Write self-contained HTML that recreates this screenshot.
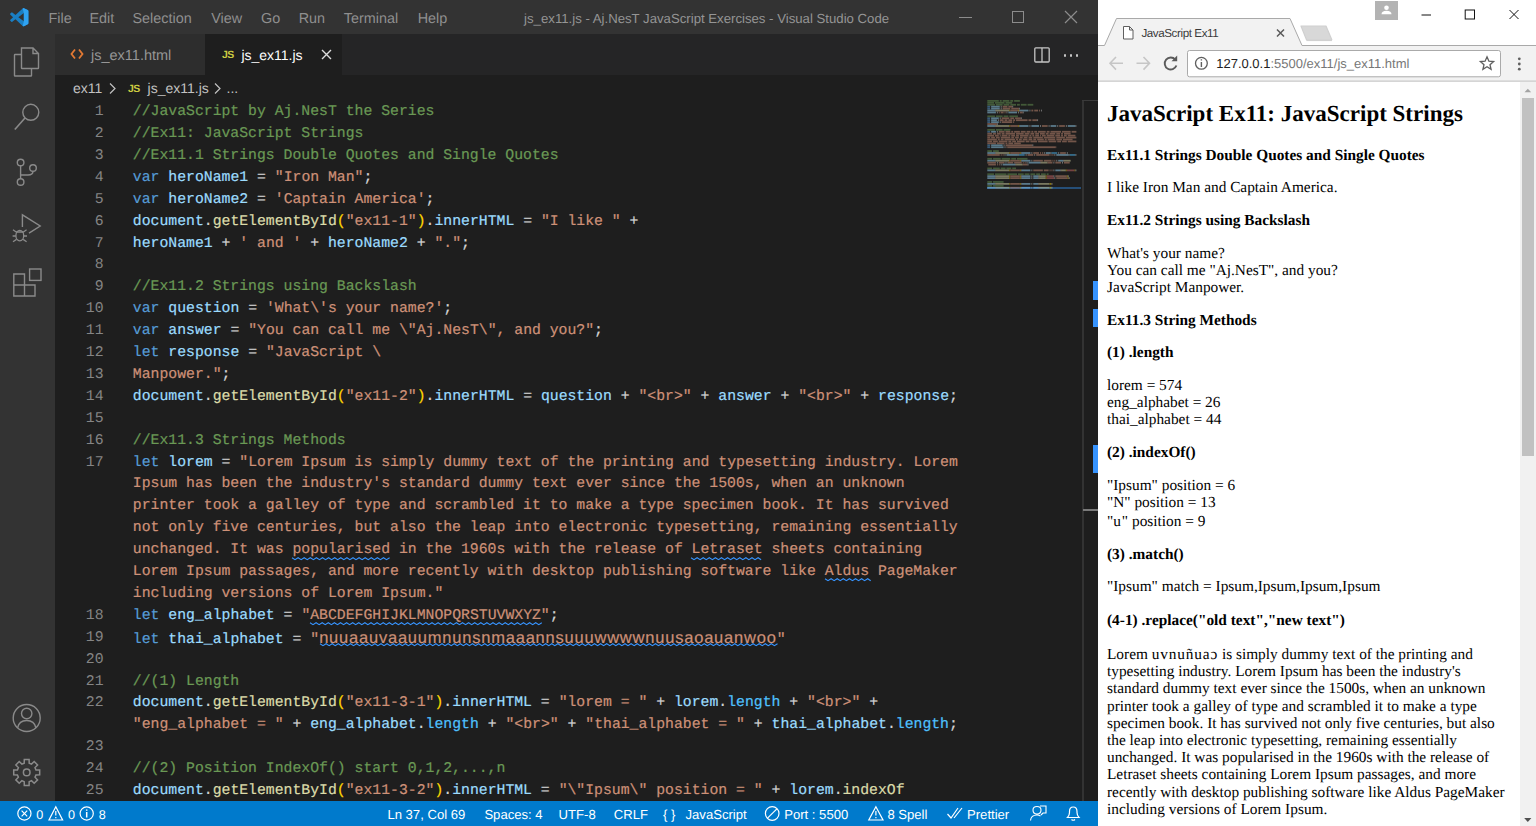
<!DOCTYPE html>
<html><head><meta charset="utf-8"><title>VS Code + Chrome</title>
<style>
html,body{margin:0;padding:0;width:1536px;height:826px;overflow:hidden;background:#1e1e1e;position:relative}
.t{position:absolute;white-space:pre;text-rendering:geometricPrecision}
svg{overflow:visible}
</style></head><body>
<div style="position:absolute;left:0;top:0;width:1098px;height:34px;background:#333333"></div><svg style="position:absolute;left:9.5px;top:7.6px" width="18.5" height="18.3" viewBox="0 0 100 100">
<path fill="#1a7fc4" d="M96.46 10.8L75.86.87a6.23 6.23 0 0 0-7.1 1.2L29.35 38.04 12.19 25.01a4.16 4.16 0 0 0-5.32.24l-5.5 5a4.17 4.17 0 0 0 0 6.16L16.26 50 1.37 63.59a4.17 4.17 0 0 0 0 6.16l5.5 5a4.16 4.16 0 0 0 5.32.24l17.16-13.03L68.76 97.93a6.23 6.23 0 0 0 7.1 1.2l20.6-9.92A6.25 6.25 0 0 0 100 83.58V16.42a6.25 6.25 0 0 0-3.54-5.62zM75 72.7L45.11 50 75 27.3z"/>
<path fill="#2fa3f2" d="M75.86.87a6.23 6.23 0 0 0-7.1 1.2L75 27.3V72.7L68.76 97.93a6.23 6.23 0 0 0 7.1 1.2l20.6-9.92A6.25 6.25 0 0 0 100 83.58V16.42a6.25 6.25 0 0 0-3.54-5.62z"/>
</svg><div class="t" style="left:48.50px;top:-1px;font:400 14.4px/40px 'Liberation Sans', sans-serif;color:#8f8f8f;">File</div>
<div class="t" style="left:89.50px;top:-1px;font:400 14.4px/40px 'Liberation Sans', sans-serif;color:#8f8f8f;">Edit</div>
<div class="t" style="left:132.50px;top:-1px;font:400 14.4px/40px 'Liberation Sans', sans-serif;color:#8f8f8f;">Selection</div>
<div class="t" style="left:211.20px;top:-1px;font:400 14.4px/40px 'Liberation Sans', sans-serif;color:#8f8f8f;">View</div>
<div class="t" style="left:261.00px;top:-1px;font:400 14.4px/40px 'Liberation Sans', sans-serif;color:#8f8f8f;">Go</div>
<div class="t" style="left:298.70px;top:-1px;font:400 14.4px/40px 'Liberation Sans', sans-serif;color:#8f8f8f;">Run</div>
<div class="t" style="left:343.80px;top:-1px;font:400 14.4px/40px 'Liberation Sans', sans-serif;color:#8f8f8f;">Terminal</div>
<div class="t" style="left:417.70px;top:-1px;font:400 14.4px/40px 'Liberation Sans', sans-serif;color:#8f8f8f;">Help</div>
<div class="t" style="left:524.10px;top:-1px;font:400 13.2px/40px 'Liberation Sans', sans-serif;color:#959595;">js_ex11.js - Aj.NesT JavaScript Exercises - Visual Studio Code</div>
<div style="position:absolute;left:959px;top:16.5px;width:13px;height:1px;background:#8c8c8c"></div><div style="position:absolute;left:1012px;top:11px;width:10px;height:10px;border:1px solid #8c8c8c"></div><svg style="position:absolute;left:1064px;top:10px" width="14" height="14" viewBox="0 0 14 14"><path d="M1 1 L13 13 M13 1 L1 13" stroke="#8c8c8c" stroke-width="1.2"/></svg><div style="position:absolute;left:0;top:34px;width:55px;height:767px;background:#333333"></div><svg style="position:absolute;left:0;top:34px" width="55" height="767" viewBox="0 34 55 767" fill="none" stroke="#8a8a8a" stroke-width="1.4">
<path d="M21 54.5 H15 Q14.5 54.5 14.5 55 V75.5 Q14.5 76 15 76 H31 Q31.5 76 31.5 75.5 V68.5"/>
<path d="M21.5 48 H33 L38.5 53.5 V68 Q38.5 68.5 38 68.5 H22 Q21.5 68.5 21.5 68 Z M33 48 V53.5 H38.5"/>
<circle cx="30.8" cy="112.3" r="8"/>
<path d="M25 118 L14.8 129.5" stroke-width="1.6"/>
<circle cx="20.6" cy="162.5" r="3.3"/>
<circle cx="20.6" cy="182" r="3.3"/>
<circle cx="33" cy="168" r="3.3"/>
<path d="M20.6 165.8 V178.7 M33 171.3 Q33 175 28 175 H20.6"/>
<path d="M22.4 227 V214.8 L40.2 226 L29 233.2"/>
<ellipse cx="19.8" cy="235.6" rx="3.9" ry="5.3" stroke-width="1.3"/>
<path d="M16 232 H23.6 M13 229.8 L16.5 232.2 M26.6 229.8 L23.1 232.2 M12.6 236 H15.9 M27 236 H23.7 M13 241.8 L16.5 239.4 M26.6 241.8 L23.1 239.4" stroke-width="1.3"/>
<path d="M13.8 274 H24.5 V285 H35 V296 H13.8 Z M13.8 285 H24.5 V296"/>
<rect x="29.6" y="269" width="11.4" height="11.4"/>
<circle cx="26.7" cy="718" r="13.5"/>
<circle cx="26.7" cy="713.5" r="5.2"/>
<path d="M17.5 728 Q19 720.5 26.7 720.5 Q34.4 720.5 36 728"/>
<circle cx="26.7" cy="772.4" r="3.3" stroke-width="1.5"/>
<path d="M35.97 769.92 L39.68 769.99 L39.68 774.81 L35.97 774.88 L35.01 777.20 L37.58 779.88 L34.18 783.28 L31.50 780.71 L29.18 781.67 L29.11 785.38 L24.29 785.38 L24.22 781.67 L21.90 780.71 L19.22 783.28 L15.82 779.88 L18.39 777.20 L17.43 774.88 L13.72 774.81 L13.72 769.99 L17.43 769.92 L18.39 767.60 L15.82 764.92 L19.22 761.52 L21.90 764.09 L24.22 763.13 L24.29 759.42 L29.11 759.42 L29.18 763.13 L31.50 764.09 L34.18 761.52 L37.58 764.92 L35.01 767.60 Z" stroke-width="1.5"/>
</svg><div style="position:absolute;left:55px;top:34px;width:1043px;height:41px;background:#252526"></div><div style="position:absolute;left:55px;top:34px;width:149.5px;height:41px;background:#2d2d2d"></div><div style="position:absolute;left:204.5px;top:34px;width:137.5px;height:41px;background:#1e1e1e"></div><svg style="position:absolute;left:70px;top:48px" width="14" height="12" viewBox="0 0 14 12" fill="none" stroke="#e37933" stroke-width="1.8"><path d="M5 1.5 L1.5 6 L5 10.5 M9 1.5 L12.5 6 L9 10.5"/></svg><div class="t" style="left:91.00px;top:36px;font:400 14.5px/40px 'Liberation Sans', sans-serif;color:#969696;">js_ex11.html</div>
<div class="t" style="left:222.00px;top:35px;font:700 10.5px/40px 'Liberation Sans', sans-serif;color:#cbcb41;letter-spacing:-0.5px;">JS</div>
<div class="t" style="left:241.40px;top:35px;font:400 14.0px/40px 'Liberation Sans', sans-serif;color:#ffffff;">js_ex11.js</div>
<svg style="position:absolute;left:321px;top:49px" width="11" height="11" viewBox="0 0 11 11"><path d="M1 1 L10 10 M10 1 L1 10" stroke="#dddddd" stroke-width="1.4"/></svg><svg style="position:absolute;left:1034px;top:47px" width="16" height="16" viewBox="0 0 16 16" fill="none" stroke="#c5c5c5" stroke-width="1.3"><rect x="0.8" y="0.8" width="14.4" height="14.2" rx="1"/><path d="M8 1 V15"/></svg><div style="position:absolute;left:1063.7px;top:54px;width:2.6px;height:2.6px;border-radius:2px;background:#c5c5c5"></div><div style="position:absolute;left:1069.7px;top:54px;width:2.6px;height:2.6px;border-radius:2px;background:#c5c5c5"></div><div style="position:absolute;left:1075.7px;top:54px;width:2.6px;height:2.6px;border-radius:2px;background:#c5c5c5"></div><div style="position:absolute;left:55px;top:75px;width:1043px;height:726px;background:#1e1e1e"></div><div class="t" style="left:73.00px;top:68px;font:400 14.0px/40px 'Liberation Sans', sans-serif;color:#c2c2c2;">ex11</div>
<svg style="position:absolute;left:108px;top:81px" width="9" height="14" viewBox="0 0 9 14" fill="none" stroke="#c2c2c2" stroke-width="1.2"><path d="M2 2.5 L7 7.5 L2 12.5"/></svg><div class="t" style="left:128.00px;top:69px;font:700 10.5px/40px 'Liberation Sans', sans-serif;color:#cbcb41;letter-spacing:-0.5px;">JS</div>
<div class="t" style="left:147.60px;top:68px;font:400 14.0px/40px 'Liberation Sans', sans-serif;color:#c2c2c2;">js_ex11.js</div>
<svg style="position:absolute;left:213px;top:81px" width="9" height="14" viewBox="0 0 9 14" fill="none" stroke="#c2c2c2" stroke-width="1.2"><path d="M2 2.5 L7 7.5 L2 12.5"/></svg><div class="t" style="left:226.50px;top:68px;font:400 14.0px/40px 'Liberation Sans', sans-serif;color:#c2c2c2;">...</div>
<div id="code"><div class="t" style="right:1432.40px;top:92px;font:400 14.795px/40px 'Liberation Mono', monospace;color:#858585;text-align:right;">1</div>
<div class="t" style="left:132.80px;top:92px;font:400 14.795px/40px 'Liberation Mono', monospace;color:#d4d4d4;-webkit-text-stroke:0.2px currentColor;"><span style="color:#6a9955">//JavaScript by Aj.NesT the Series</span></div>
<div class="t" style="right:1432.40px;top:114px;font:400 14.795px/40px 'Liberation Mono', monospace;color:#858585;text-align:right;">2</div>
<div class="t" style="left:132.80px;top:114px;font:400 14.795px/40px 'Liberation Mono', monospace;color:#d4d4d4;-webkit-text-stroke:0.2px currentColor;"><span style="color:#6a9955">//Ex11: JavaScript Strings</span></div>
<div class="t" style="right:1432.40px;top:136px;font:400 14.795px/40px 'Liberation Mono', monospace;color:#858585;text-align:right;">3</div>
<div class="t" style="left:132.80px;top:136px;font:400 14.795px/40px 'Liberation Mono', monospace;color:#d4d4d4;-webkit-text-stroke:0.2px currentColor;"><span style="color:#6a9955">//Ex11.1 Strings Double Quotes and Single Quotes</span></div>
<div class="t" style="right:1432.40px;top:158px;font:400 14.795px/40px 'Liberation Mono', monospace;color:#858585;text-align:right;">4</div>
<div class="t" style="left:132.80px;top:158px;font:400 14.795px/40px 'Liberation Mono', monospace;color:#d4d4d4;-webkit-text-stroke:0.2px currentColor;"><span style="color:#569cd6">var</span><span style="color:#d4d4d4"> </span><span style="color:#9cdcfe">heroName1</span><span style="color:#d4d4d4"> = </span><span style="color:#ce9178">"Iron Man"</span><span style="color:#d4d4d4">;</span></div>
<div class="t" style="right:1432.40px;top:180px;font:400 14.795px/40px 'Liberation Mono', monospace;color:#858585;text-align:right;">5</div>
<div class="t" style="left:132.80px;top:180px;font:400 14.795px/40px 'Liberation Mono', monospace;color:#d4d4d4;-webkit-text-stroke:0.2px currentColor;"><span style="color:#569cd6">var</span><span style="color:#d4d4d4"> </span><span style="color:#9cdcfe">heroName2</span><span style="color:#d4d4d4"> = </span><span style="color:#ce9178">'Captain America'</span><span style="color:#d4d4d4">;</span></div>
<div class="t" style="right:1432.40px;top:202px;font:400 14.795px/40px 'Liberation Mono', monospace;color:#858585;text-align:right;">6</div>
<div class="t" style="left:132.80px;top:202px;font:400 14.795px/40px 'Liberation Mono', monospace;color:#d4d4d4;-webkit-text-stroke:0.2px currentColor;"><span style="color:#9cdcfe">document</span><span style="color:#d4d4d4">.</span><span style="color:#dcdcaa">getElementById</span><span style="color:#ffd700">(</span><span style="color:#ce9178">"ex11-1"</span><span style="color:#ffd700">)</span><span style="color:#d4d4d4">.</span><span style="color:#9cdcfe">innerHTML</span><span style="color:#d4d4d4"> = </span><span style="color:#ce9178">"I like "</span><span style="color:#d4d4d4"> +</span></div>
<div class="t" style="right:1432.40px;top:224px;font:400 14.795px/40px 'Liberation Mono', monospace;color:#858585;text-align:right;">7</div>
<div class="t" style="left:132.80px;top:224px;font:400 14.795px/40px 'Liberation Mono', monospace;color:#d4d4d4;-webkit-text-stroke:0.2px currentColor;"><span style="color:#9cdcfe">heroName1</span><span style="color:#d4d4d4"> + </span><span style="color:#ce9178">' and '</span><span style="color:#d4d4d4"> + </span><span style="color:#9cdcfe">heroName2</span><span style="color:#d4d4d4"> + </span><span style="color:#ce9178">"."</span><span style="color:#d4d4d4">;</span></div>
<div class="t" style="right:1432.40px;top:245px;font:400 14.795px/40px 'Liberation Mono', monospace;color:#858585;text-align:right;">8</div>
<div class="t" style="right:1432.40px;top:267px;font:400 14.795px/40px 'Liberation Mono', monospace;color:#858585;text-align:right;">9</div>
<div class="t" style="left:132.80px;top:267px;font:400 14.795px/40px 'Liberation Mono', monospace;color:#d4d4d4;-webkit-text-stroke:0.2px currentColor;"><span style="color:#6a9955">//Ex11.2 Strings using Backslash</span></div>
<div class="t" style="right:1432.40px;top:289px;font:400 14.795px/40px 'Liberation Mono', monospace;color:#858585;text-align:right;">10</div>
<div class="t" style="left:132.80px;top:289px;font:400 14.795px/40px 'Liberation Mono', monospace;color:#d4d4d4;-webkit-text-stroke:0.2px currentColor;"><span style="color:#569cd6">var</span><span style="color:#d4d4d4"> </span><span style="color:#9cdcfe">question</span><span style="color:#d4d4d4"> = </span><span style="color:#ce9178">'What\'s your name?'</span><span style="color:#d4d4d4">;</span></div>
<div class="t" style="right:1432.40px;top:311px;font:400 14.795px/40px 'Liberation Mono', monospace;color:#858585;text-align:right;">11</div>
<div class="t" style="left:132.80px;top:311px;font:400 14.795px/40px 'Liberation Mono', monospace;color:#d4d4d4;-webkit-text-stroke:0.2px currentColor;"><span style="color:#569cd6">var</span><span style="color:#d4d4d4"> </span><span style="color:#9cdcfe">answer</span><span style="color:#d4d4d4"> = </span><span style="color:#ce9178">"You can call me \"Aj.NesT\", and you?"</span><span style="color:#d4d4d4">;</span></div>
<div class="t" style="right:1432.40px;top:333px;font:400 14.795px/40px 'Liberation Mono', monospace;color:#858585;text-align:right;">12</div>
<div class="t" style="left:132.80px;top:333px;font:400 14.795px/40px 'Liberation Mono', monospace;color:#d4d4d4;-webkit-text-stroke:0.2px currentColor;"><span style="color:#569cd6">let</span><span style="color:#d4d4d4"> </span><span style="color:#9cdcfe">response</span><span style="color:#d4d4d4"> = </span><span style="color:#ce9178">"JavaScript \</span></div>
<div class="t" style="right:1432.40px;top:355px;font:400 14.795px/40px 'Liberation Mono', monospace;color:#858585;text-align:right;">13</div>
<div class="t" style="left:132.80px;top:355px;font:400 14.795px/40px 'Liberation Mono', monospace;color:#d4d4d4;-webkit-text-stroke:0.2px currentColor;"><span style="color:#ce9178">Manpower."</span><span style="color:#d4d4d4">;</span></div>
<div class="t" style="right:1432.40px;top:377px;font:400 14.795px/40px 'Liberation Mono', monospace;color:#858585;text-align:right;">14</div>
<div class="t" style="left:132.80px;top:377px;font:400 14.795px/40px 'Liberation Mono', monospace;color:#d4d4d4;-webkit-text-stroke:0.2px currentColor;"><span style="color:#9cdcfe">document</span><span style="color:#d4d4d4">.</span><span style="color:#dcdcaa">getElementById</span><span style="color:#ffd700">(</span><span style="color:#ce9178">"ex11-2"</span><span style="color:#ffd700">)</span><span style="color:#d4d4d4">.</span><span style="color:#9cdcfe">innerHTML</span><span style="color:#d4d4d4"> = </span><span style="color:#9cdcfe">question</span><span style="color:#d4d4d4"> + </span><span style="color:#ce9178">"&lt;br&gt;"</span><span style="color:#d4d4d4"> + </span><span style="color:#9cdcfe">answer</span><span style="color:#d4d4d4"> + </span><span style="color:#ce9178">"&lt;br&gt;"</span><span style="color:#d4d4d4"> + </span><span style="color:#9cdcfe">response</span><span style="color:#d4d4d4">;</span></div>
<div class="t" style="right:1432.40px;top:399px;font:400 14.795px/40px 'Liberation Mono', monospace;color:#858585;text-align:right;">15</div>
<div class="t" style="right:1432.40px;top:421px;font:400 14.795px/40px 'Liberation Mono', monospace;color:#858585;text-align:right;">16</div>
<div class="t" style="left:132.80px;top:421px;font:400 14.795px/40px 'Liberation Mono', monospace;color:#d4d4d4;-webkit-text-stroke:0.2px currentColor;"><span style="color:#6a9955">//Ex11.3 Strings Methods</span></div>
<div class="t" style="right:1432.40px;top:443px;font:400 14.795px/40px 'Liberation Mono', monospace;color:#858585;text-align:right;">17</div>
<div class="t" style="left:132.80px;top:443px;font:400 14.795px/40px 'Liberation Mono', monospace;color:#d4d4d4;-webkit-text-stroke:0.2px currentColor;"><span style="color:#569cd6">let</span><span style="color:#d4d4d4"> </span><span style="color:#9cdcfe">lorem</span><span style="color:#d4d4d4"> = </span><span style="color:#ce9178">"Lorem Ipsum is simply dummy text of the printing and typesetting industry. Lorem</span></div>
<div class="t" style="left:132.80px;top:464px;font:400 14.795px/40px 'Liberation Mono', monospace;color:#d4d4d4;-webkit-text-stroke:0.2px currentColor;"><span style="color:#ce9178">Ipsum has been the industry's standard dummy text ever since the 1500s, when an unknown</span></div>
<div class="t" style="left:132.80px;top:486px;font:400 14.795px/40px 'Liberation Mono', monospace;color:#d4d4d4;-webkit-text-stroke:0.2px currentColor;"><span style="color:#ce9178">printer took a galley of type and scrambled it to make a type specimen book. It has survived</span></div>
<div class="t" style="left:132.80px;top:508px;font:400 14.795px/40px 'Liberation Mono', monospace;color:#d4d4d4;-webkit-text-stroke:0.2px currentColor;"><span style="color:#ce9178">not only five centuries, but also the leap into electronic typesetting, remaining essentially</span></div>
<div class="t" style="left:132.80px;top:530px;font:400 14.795px/40px 'Liberation Mono', monospace;color:#d4d4d4;-webkit-text-stroke:0.2px currentColor;"><span style="color:#ce9178">unchanged. It was popularised in the 1960s with the release of Letraset sheets containing</span></div>
<div class="t" style="left:132.80px;top:552px;font:400 14.795px/40px 'Liberation Mono', monospace;color:#d4d4d4;-webkit-text-stroke:0.2px currentColor;"><span style="color:#ce9178">Lorem Ipsum passages, and more recently with desktop publishing software like Aldus PageMaker</span></div>
<div class="t" style="left:132.80px;top:574px;font:400 14.795px/40px 'Liberation Mono', monospace;color:#d4d4d4;-webkit-text-stroke:0.2px currentColor;"><span style="color:#ce9178">including versions of Lorem Ipsum."</span></div>
<div class="t" style="right:1432.40px;top:596px;font:400 14.795px/40px 'Liberation Mono', monospace;color:#858585;text-align:right;">18</div>
<div class="t" style="left:132.80px;top:596px;font:400 14.795px/40px 'Liberation Mono', monospace;color:#d4d4d4;-webkit-text-stroke:0.2px currentColor;"><span style="color:#569cd6">let</span><span style="color:#d4d4d4"> </span><span style="color:#9cdcfe">eng_alphabet</span><span style="color:#d4d4d4"> = </span><span style="color:#ce9178">"ABCDEFGHIJKLMNOPQRSTUVWXYZ"</span><span style="color:#d4d4d4">;</span></div>
<div class="t" style="right:1432.40px;top:618px;font:400 14.795px/40px 'Liberation Mono', monospace;color:#858585;text-align:right;">19</div>
<div class="t" style="left:132.80px;top:618px;font:400 14.795px/40px 'Liberation Mono', monospace;color:#d4d4d4;-webkit-text-stroke:0.2px currentColor;"><span style="color:#569cd6">let</span><span style="color:#d4d4d4"> </span><span style="color:#9cdcfe">thai_alphabet</span><span style="color:#d4d4d4"> = </span><span style="color:#ce9178">"</span><span style="color:#ce9178;display:inline-block;width:457.5px;white-space:nowrap;font-family:'Liberation Sans',sans-serif;font-size:16.5px;letter-spacing:0.786px">nuuaauvaauumnunsnmaaannsuuuwwwwnuusaoauanwoo</span><span style="color:#ce9178">"</span></div>
<div class="t" style="right:1432.40px;top:640px;font:400 14.795px/40px 'Liberation Mono', monospace;color:#858585;text-align:right;">20</div>
<div class="t" style="right:1432.40px;top:662px;font:400 14.795px/40px 'Liberation Mono', monospace;color:#858585;text-align:right;">21</div>
<div class="t" style="left:132.80px;top:662px;font:400 14.795px/40px 'Liberation Mono', monospace;color:#d4d4d4;-webkit-text-stroke:0.2px currentColor;"><span style="color:#6a9955">//(1) Length</span></div>
<div class="t" style="right:1432.40px;top:683px;font:400 14.795px/40px 'Liberation Mono', monospace;color:#858585;text-align:right;">22</div>
<div class="t" style="left:132.80px;top:683px;font:400 14.795px/40px 'Liberation Mono', monospace;color:#d4d4d4;-webkit-text-stroke:0.2px currentColor;"><span style="color:#9cdcfe">document</span><span style="color:#d4d4d4">.</span><span style="color:#dcdcaa">getElementById</span><span style="color:#ffd700">(</span><span style="color:#ce9178">"ex11-3-1"</span><span style="color:#ffd700">)</span><span style="color:#d4d4d4">.</span><span style="color:#9cdcfe">innerHTML</span><span style="color:#d4d4d4"> = </span><span style="color:#ce9178">"lorem = "</span><span style="color:#d4d4d4"> + </span><span style="color:#9cdcfe">lorem</span><span style="color:#d4d4d4">.</span><span style="color:#4fc1ff">length</span><span style="color:#d4d4d4"> + </span><span style="color:#ce9178">"&lt;br&gt;"</span><span style="color:#d4d4d4"> +</span></div>
<div class="t" style="left:132.80px;top:705px;font:400 14.795px/40px 'Liberation Mono', monospace;color:#d4d4d4;-webkit-text-stroke:0.2px currentColor;"><span style="color:#ce9178">"eng_alphabet = "</span><span style="color:#d4d4d4"> + </span><span style="color:#9cdcfe">eng_alphabet</span><span style="color:#d4d4d4">.</span><span style="color:#4fc1ff">length</span><span style="color:#d4d4d4"> + </span><span style="color:#ce9178">"&lt;br&gt;"</span><span style="color:#d4d4d4"> + </span><span style="color:#ce9178">"thai_alphabet = "</span><span style="color:#d4d4d4"> + </span><span style="color:#9cdcfe">thai_alphabet</span><span style="color:#d4d4d4">.</span><span style="color:#4fc1ff">length</span><span style="color:#d4d4d4">;</span></div>
<div class="t" style="right:1432.40px;top:727px;font:400 14.795px/40px 'Liberation Mono', monospace;color:#858585;text-align:right;">23</div>
<div class="t" style="right:1432.40px;top:749px;font:400 14.795px/40px 'Liberation Mono', monospace;color:#858585;text-align:right;">24</div>
<div class="t" style="left:132.80px;top:749px;font:400 14.795px/40px 'Liberation Mono', monospace;color:#d4d4d4;-webkit-text-stroke:0.2px currentColor;"><span style="color:#6a9955">//(2) Position IndexOf() start 0,1,2,...,n</span></div>
<div class="t" style="right:1432.40px;top:771px;font:400 14.795px/40px 'Liberation Mono', monospace;color:#858585;text-align:right;">25</div>
<div class="t" style="left:132.80px;top:771px;font:400 14.795px/40px 'Liberation Mono', monospace;color:#d4d4d4;-webkit-text-stroke:0.2px currentColor;"><span style="color:#9cdcfe">document</span><span style="color:#d4d4d4">.</span><span style="color:#dcdcaa">getElementById</span><span style="color:#ffd700">(</span><span style="color:#ce9178">"ex11-3-2"</span><span style="color:#ffd700">)</span><span style="color:#d4d4d4">.</span><span style="color:#9cdcfe">innerHTML</span><span style="color:#d4d4d4"> = </span><span style="color:#ce9178">"\"Ipsum\" position = "</span><span style="color:#d4d4d4"> + </span><span style="color:#9cdcfe">lorem</span><span style="color:#d4d4d4">.</span><span style="color:#dcdcaa">indexOf</span></div>
</div><svg style="position:absolute;left:292.0px;top:556.5px" width="101" height="4" viewBox="0 -0.7 101 4"><polyline points="0.0,0.0 3.0,2.0 6.1,0.0 9.1,2.0 12.2,0.0 15.2,2.0 18.3,0.0 21.4,2.0 24.4,0.0 27.5,2.0 30.5,0.0 33.6,2.0 36.6,0.0 39.6,2.0 42.7,0.0 45.7,2.0 48.8,0.0 51.8,2.0 54.9,0.0 57.9,2.0 61.0,0.0 64.0,2.0 67.1,0.0 70.1,2.0 73.2,0.0 76.2,2.0 79.3,0.0 82.3,2.0 85.4,0.0 88.4,2.0 91.5,0.0 94.5,2.0 97.6,0.0" fill="none" stroke="#3794ff" stroke-width="1.1"/></svg><svg style="position:absolute;left:691.4px;top:556.5px" width="74" height="4" viewBox="0 -0.7 74 4"><polyline points="0.0,0.0 3.0,2.0 6.1,0.0 9.1,2.0 12.2,0.0 15.2,2.0 18.3,0.0 21.4,2.0 24.4,0.0 27.5,2.0 30.5,0.0 33.6,2.0 36.6,0.0 39.6,2.0 42.7,0.0 45.7,2.0 48.8,0.0 51.8,2.0 54.9,0.0 57.9,2.0 61.0,0.0 64.0,2.0 67.1,0.0 70.1,2.0" fill="none" stroke="#3794ff" stroke-width="1.1"/></svg><svg style="position:absolute;left:824.5px;top:578.4px" width="48" height="4" viewBox="0 -0.7 48 4"><polyline points="0.0,0.0 3.0,2.0 6.1,0.0 9.1,2.0 12.2,0.0 15.2,2.0 18.3,0.0 21.4,2.0 24.4,0.0 27.5,2.0 30.5,0.0 33.6,2.0 36.6,0.0 39.6,2.0 42.7,0.0 45.7,2.0" fill="none" stroke="#3794ff" stroke-width="1.1"/></svg><svg style="position:absolute;left:309.8px;top:622.2px" width="234" height="4" viewBox="0 -0.7 234 4"><polyline points="0.0,0.0 3.0,2.0 6.1,0.0 9.1,2.0 12.2,0.0 15.2,2.0 18.3,0.0 21.4,2.0 24.4,0.0 27.5,2.0 30.5,0.0 33.6,2.0 36.6,0.0 39.6,2.0 42.7,0.0 45.7,2.0 48.8,0.0 51.8,2.0 54.9,0.0 57.9,2.0 61.0,0.0 64.0,2.0 67.1,0.0 70.1,2.0 73.2,0.0 76.2,2.0 79.3,0.0 82.3,2.0 85.4,0.0 88.4,2.0 91.5,0.0 94.5,2.0 97.6,0.0 100.6,2.0 103.7,0.0 106.7,2.0 109.8,0.0 112.8,2.0 115.9,0.0 118.9,2.0 122.0,0.0 125.0,2.0 128.1,0.0 131.1,2.0 134.2,0.0 137.2,2.0 140.3,0.0 143.3,2.0 146.4,0.0 149.5,2.0 152.5,0.0 155.6,2.0 158.6,0.0 161.7,2.0 164.7,0.0 167.8,2.0 170.8,0.0 173.9,2.0 176.9,0.0 180.0,2.0 183.0,0.0 186.1,2.0 189.1,0.0 192.2,2.0 195.2,0.0 198.3,2.0 201.3,0.0 204.4,2.0 207.4,0.0 210.5,2.0 213.5,0.0 216.6,2.0 219.6,0.0 222.7,2.0 225.7,0.0 228.8,2.0 231.8,0.0" fill="none" stroke="#3794ff" stroke-width="1.1"/></svg><svg style="position:absolute;left:320.4px;top:643.2px" width="458" height="4" viewBox="0 -0.7 458 4"><polyline points="0.0,0 3.0,2.0 6.1,0 9.1,2.0 12.2,0 15.2,2.0 18.3,0 21.3,2.0 24.4,0 27.4,2.0 30.5,0 33.5,2.0 36.6,0 39.6,2.0 42.7,0 45.8,2.0 48.8,0 51.8,2.0 54.9,0 57.9,2.0 61.0,0 64.0,2.0 67.1,0 70.1,2.0 73.2,0 76.2,2.0 79.3,0 82.3,2.0 85.4,0 88.4,2.0 91.5,0 94.5,2.0 97.6,0 100.6,2.0 103.7,0 106.8,2.0 109.8,0 112.8,2.0 115.9,0 118.9,2.0 122.0,0 125.0,2.0 128.1,0 131.2,2.0 134.2,0 137.2,2.0 140.3,0 143.3,2.0 146.4,0 149.4,2.0 152.5,0 155.5,2.0 158.6,0 161.6,2.0 164.7,0 167.8,2.0 170.8,0 173.8,2.0 176.9,0 179.9,2.0 183.0,0 186.0,2.0 189.1,0 192.1,2.0 195.2,0 198.2,2.0 201.3,0 204.3,2.0 207.4,0 210.4,2.0 213.5,0 216.5,2.0 219.6,0 222.6,2.0 225.7,0 228.8,2.0 231.8,0 234.8,2.0 237.9,0 240.9,2.0 244.0,0 247.0,2.0 250.1,0 253.1,2.0 256.2,0 259.2,2.0 262.3,0 265.3,2.0 268.4,0 271.4,2.0 274.5,0 277.6,2.0 280.6,0 283.6,2.0 286.7,0 289.8,2.0 292.8,0 295.8,2.0 298.9,0 301.9,2.0 305.0,0 308.0,2.0 311.1,0 314.1,2.0 317.2,0 320.2,2.0 323.3,0 326.3,2.0 329.4,0 332.4,2.0 335.5,0 338.5,2.0 341.6,0 344.6,2.0 347.7,0 350.8,2.0 353.8,0 356.8,2.0 359.9,0 362.9,2.0 366.0,0 369.0,2.0 372.1,0 375.1,2.0 378.2,0 381.2,2.0 384.3,0 387.3,2.0 390.4,0 393.4,2.0 396.5,0 399.5,2.0 402.6,0 405.6,2.0 408.7,0 411.8,2.0 414.8,0 417.8,2.0 420.9,0 423.9,2.0 427.0,0 430.0,2.0 433.1,0 436.1,2.0 439.2,0 442.2,2.0 445.3,0 448.3,2.0 451.4,0 454.4,2.0 457.5,0" fill="none" stroke="#3794ff" stroke-width="1.1"/></svg><div style="position:absolute;left:987px;top:186.65px;width:94px;height:2.2px;background:#264f78"></div><svg style="position:absolute;left:0;top:0" width="1098" height="200" opacity="0.48"><rect x="987.30" y="100.00" width="11.50" height="1.8" fill="#6a9955"/><rect x="999.75" y="100.00" width="1.92" height="1.8" fill="#6a9955"/><rect x="1002.63" y="100.00" width="6.71" height="1.8" fill="#6a9955"/><rect x="1010.29" y="100.00" width="2.87" height="1.8" fill="#6a9955"/><rect x="1014.12" y="100.00" width="5.75" height="1.8" fill="#6a9955"/><rect x="987.30" y="101.93" width="6.71" height="1.8" fill="#6a9955"/><rect x="994.96" y="101.93" width="9.58" height="1.8" fill="#6a9955"/><rect x="1005.50" y="101.93" width="6.71" height="1.8" fill="#6a9955"/><rect x="987.30" y="103.86" width="7.66" height="1.8" fill="#6a9955"/><rect x="995.92" y="103.86" width="6.71" height="1.8" fill="#6a9955"/><rect x="1003.59" y="103.86" width="5.75" height="1.8" fill="#6a9955"/><rect x="1010.29" y="103.86" width="5.75" height="1.8" fill="#6a9955"/><rect x="1017.00" y="103.86" width="2.87" height="1.8" fill="#6a9955"/><rect x="1020.83" y="103.86" width="5.75" height="1.8" fill="#6a9955"/><rect x="1027.54" y="103.86" width="5.75" height="1.8" fill="#6a9955"/><rect x="987.30" y="105.79" width="2.87" height="1.8" fill="#569cd6"/><rect x="991.13" y="105.79" width="8.62" height="1.8" fill="#9cdcfe"/><rect x="1000.71" y="105.79" width="0.96" height="1.8" fill="#d4d4d4"/><rect x="1002.63" y="105.79" width="4.79" height="1.8" fill="#ce9178"/><rect x="1008.38" y="105.79" width="3.83" height="1.8" fill="#ce9178"/><rect x="1012.21" y="105.79" width="0.96" height="1.8" fill="#d4d4d4"/><rect x="987.30" y="107.72" width="2.87" height="1.8" fill="#569cd6"/><rect x="991.13" y="107.72" width="8.62" height="1.8" fill="#9cdcfe"/><rect x="1000.71" y="107.72" width="0.96" height="1.8" fill="#d4d4d4"/><rect x="1002.63" y="107.72" width="7.66" height="1.8" fill="#ce9178"/><rect x="1011.25" y="107.72" width="7.66" height="1.8" fill="#ce9178"/><rect x="1018.91" y="107.72" width="0.96" height="1.8" fill="#d4d4d4"/><rect x="987.30" y="109.65" width="7.66" height="1.8" fill="#9cdcfe"/><rect x="994.96" y="109.65" width="0.96" height="1.8" fill="#d4d4d4"/><rect x="995.92" y="109.65" width="13.41" height="1.8" fill="#dcdcaa"/><rect x="1009.33" y="109.65" width="0.96" height="1.8" fill="#ffd700"/><rect x="1010.29" y="109.65" width="7.66" height="1.8" fill="#ce9178"/><rect x="1017.96" y="109.65" width="0.96" height="1.8" fill="#ffd700"/><rect x="1018.91" y="109.65" width="0.96" height="1.8" fill="#d4d4d4"/><rect x="1019.87" y="109.65" width="8.62" height="1.8" fill="#9cdcfe"/><rect x="1029.45" y="109.65" width="0.96" height="1.8" fill="#d4d4d4"/><rect x="1031.37" y="109.65" width="1.92" height="1.8" fill="#ce9178"/><rect x="1034.24" y="109.65" width="3.83" height="1.8" fill="#ce9178"/><rect x="1039.03" y="109.65" width="0.96" height="1.8" fill="#ce9178"/><rect x="1040.95" y="109.65" width="0.96" height="1.8" fill="#d4d4d4"/><rect x="987.30" y="111.58" width="8.62" height="1.8" fill="#9cdcfe"/><rect x="996.88" y="111.58" width="0.96" height="1.8" fill="#d4d4d4"/><rect x="998.80" y="111.58" width="0.96" height="1.8" fill="#ce9178"/><rect x="1000.71" y="111.58" width="2.87" height="1.8" fill="#ce9178"/><rect x="1004.54" y="111.58" width="0.96" height="1.8" fill="#ce9178"/><rect x="1006.46" y="111.58" width="0.96" height="1.8" fill="#d4d4d4"/><rect x="1008.38" y="111.58" width="8.62" height="1.8" fill="#9cdcfe"/><rect x="1017.96" y="111.58" width="0.96" height="1.8" fill="#d4d4d4"/><rect x="1019.87" y="111.58" width="2.87" height="1.8" fill="#ce9178"/><rect x="1022.75" y="111.58" width="0.96" height="1.8" fill="#d4d4d4"/><rect x="987.30" y="115.44" width="7.66" height="1.8" fill="#6a9955"/><rect x="995.92" y="115.44" width="6.71" height="1.8" fill="#6a9955"/><rect x="1003.59" y="115.44" width="4.79" height="1.8" fill="#6a9955"/><rect x="1009.33" y="115.44" width="8.62" height="1.8" fill="#6a9955"/><rect x="987.30" y="117.37" width="2.87" height="1.8" fill="#569cd6"/><rect x="991.13" y="117.37" width="7.66" height="1.8" fill="#9cdcfe"/><rect x="999.75" y="117.37" width="0.96" height="1.8" fill="#d4d4d4"/><rect x="1001.67" y="117.37" width="7.66" height="1.8" fill="#ce9178"/><rect x="1010.29" y="117.37" width="3.83" height="1.8" fill="#ce9178"/><rect x="1015.08" y="117.37" width="5.75" height="1.8" fill="#ce9178"/><rect x="1020.83" y="117.37" width="0.96" height="1.8" fill="#d4d4d4"/><rect x="987.30" y="119.30" width="2.87" height="1.8" fill="#569cd6"/><rect x="991.13" y="119.30" width="5.75" height="1.8" fill="#9cdcfe"/><rect x="997.84" y="119.30" width="0.96" height="1.8" fill="#d4d4d4"/><rect x="999.75" y="119.30" width="3.83" height="1.8" fill="#ce9178"/><rect x="1004.54" y="119.30" width="2.87" height="1.8" fill="#ce9178"/><rect x="1008.38" y="119.30" width="3.83" height="1.8" fill="#ce9178"/><rect x="1013.17" y="119.30" width="1.92" height="1.8" fill="#ce9178"/><rect x="1016.04" y="119.30" width="11.50" height="1.8" fill="#ce9178"/><rect x="1028.49" y="119.30" width="2.87" height="1.8" fill="#ce9178"/><rect x="1032.33" y="119.30" width="4.79" height="1.8" fill="#ce9178"/><rect x="1037.12" y="119.30" width="0.96" height="1.8" fill="#d4d4d4"/><rect x="987.30" y="121.23" width="2.87" height="1.8" fill="#569cd6"/><rect x="991.13" y="121.23" width="7.66" height="1.8" fill="#9cdcfe"/><rect x="999.75" y="121.23" width="0.96" height="1.8" fill="#d4d4d4"/><rect x="1001.67" y="121.23" width="10.54" height="1.8" fill="#ce9178"/><rect x="1013.17" y="121.23" width="0.96" height="1.8" fill="#ce9178"/><rect x="987.30" y="123.16" width="9.58" height="1.8" fill="#ce9178"/><rect x="996.88" y="123.16" width="0.96" height="1.8" fill="#d4d4d4"/><rect x="987.30" y="125.09" width="7.66" height="1.8" fill="#9cdcfe"/><rect x="994.96" y="125.09" width="0.96" height="1.8" fill="#d4d4d4"/><rect x="995.92" y="125.09" width="13.41" height="1.8" fill="#dcdcaa"/><rect x="1009.33" y="125.09" width="0.96" height="1.8" fill="#ffd700"/><rect x="1010.29" y="125.09" width="7.66" height="1.8" fill="#ce9178"/><rect x="1017.96" y="125.09" width="0.96" height="1.8" fill="#ffd700"/><rect x="1018.91" y="125.09" width="0.96" height="1.8" fill="#d4d4d4"/><rect x="1019.87" y="125.09" width="8.62" height="1.8" fill="#9cdcfe"/><rect x="1029.45" y="125.09" width="0.96" height="1.8" fill="#d4d4d4"/><rect x="1031.37" y="125.09" width="7.66" height="1.8" fill="#9cdcfe"/><rect x="1039.99" y="125.09" width="0.96" height="1.8" fill="#d4d4d4"/><rect x="1041.91" y="125.09" width="5.75" height="1.8" fill="#ce9178"/><rect x="1048.61" y="125.09" width="0.96" height="1.8" fill="#d4d4d4"/><rect x="1050.53" y="125.09" width="5.75" height="1.8" fill="#9cdcfe"/><rect x="1057.23" y="125.09" width="0.96" height="1.8" fill="#d4d4d4"/><rect x="1059.15" y="125.09" width="5.75" height="1.8" fill="#ce9178"/><rect x="1065.86" y="125.09" width="0.96" height="1.8" fill="#d4d4d4"/><rect x="1067.77" y="125.09" width="7.66" height="1.8" fill="#9cdcfe"/><rect x="1075.44" y="125.09" width="0.96" height="1.8" fill="#d4d4d4"/><rect x="987.30" y="128.95" width="7.66" height="1.8" fill="#6a9955"/><rect x="995.92" y="128.95" width="6.71" height="1.8" fill="#6a9955"/><rect x="1003.59" y="128.95" width="6.71" height="1.8" fill="#6a9955"/><rect x="987.30" y="130.88" width="2.87" height="1.8" fill="#569cd6"/><rect x="991.13" y="130.88" width="4.79" height="1.8" fill="#9cdcfe"/><rect x="996.88" y="130.88" width="0.96" height="1.8" fill="#d4d4d4"/><rect x="998.80" y="130.88" width="5.75" height="1.8" fill="#ce9178"/><rect x="1005.50" y="130.88" width="4.79" height="1.8" fill="#ce9178"/><rect x="1011.25" y="130.88" width="1.92" height="1.8" fill="#ce9178"/><rect x="1014.12" y="130.88" width="5.75" height="1.8" fill="#ce9178"/><rect x="1020.83" y="130.88" width="4.79" height="1.8" fill="#ce9178"/><rect x="1026.58" y="130.88" width="3.83" height="1.8" fill="#ce9178"/><rect x="1031.37" y="130.88" width="1.92" height="1.8" fill="#ce9178"/><rect x="1034.24" y="130.88" width="2.87" height="1.8" fill="#ce9178"/><rect x="1038.07" y="130.88" width="7.66" height="1.8" fill="#ce9178"/><rect x="1046.70" y="130.88" width="2.87" height="1.8" fill="#ce9178"/><rect x="1050.53" y="130.88" width="10.54" height="1.8" fill="#ce9178"/><rect x="1062.02" y="130.88" width="8.62" height="1.8" fill="#ce9178"/><rect x="1071.60" y="130.88" width="4.79" height="1.8" fill="#ce9178"/><rect x="987.30" y="132.81" width="4.79" height="1.8" fill="#ce9178"/><rect x="993.05" y="132.81" width="2.87" height="1.8" fill="#ce9178"/><rect x="996.88" y="132.81" width="3.83" height="1.8" fill="#ce9178"/><rect x="1001.67" y="132.81" width="2.87" height="1.8" fill="#ce9178"/><rect x="1005.50" y="132.81" width="9.58" height="1.8" fill="#ce9178"/><rect x="1016.04" y="132.81" width="7.66" height="1.8" fill="#ce9178"/><rect x="1024.66" y="132.81" width="4.79" height="1.8" fill="#ce9178"/><rect x="1030.41" y="132.81" width="3.83" height="1.8" fill="#ce9178"/><rect x="1035.20" y="132.81" width="3.83" height="1.8" fill="#ce9178"/><rect x="1039.99" y="132.81" width="4.79" height="1.8" fill="#ce9178"/><rect x="1045.74" y="132.81" width="2.87" height="1.8" fill="#ce9178"/><rect x="1049.57" y="132.81" width="5.75" height="1.8" fill="#ce9178"/><rect x="1056.28" y="132.81" width="3.83" height="1.8" fill="#ce9178"/><rect x="1061.07" y="132.81" width="1.92" height="1.8" fill="#ce9178"/><rect x="1063.94" y="132.81" width="6.71" height="1.8" fill="#ce9178"/><rect x="987.30" y="134.74" width="6.71" height="1.8" fill="#ce9178"/><rect x="994.96" y="134.74" width="3.83" height="1.8" fill="#ce9178"/><rect x="999.75" y="134.74" width="0.96" height="1.8" fill="#ce9178"/><rect x="1001.67" y="134.74" width="5.75" height="1.8" fill="#ce9178"/><rect x="1008.38" y="134.74" width="1.92" height="1.8" fill="#ce9178"/><rect x="1011.25" y="134.74" width="3.83" height="1.8" fill="#ce9178"/><rect x="1016.04" y="134.74" width="2.87" height="1.8" fill="#ce9178"/><rect x="1019.87" y="134.74" width="8.62" height="1.8" fill="#ce9178"/><rect x="1029.45" y="134.74" width="1.92" height="1.8" fill="#ce9178"/><rect x="1032.33" y="134.74" width="1.92" height="1.8" fill="#ce9178"/><rect x="1035.20" y="134.74" width="3.83" height="1.8" fill="#ce9178"/><rect x="1039.99" y="134.74" width="0.96" height="1.8" fill="#ce9178"/><rect x="1041.91" y="134.74" width="3.83" height="1.8" fill="#ce9178"/><rect x="1046.70" y="134.74" width="7.66" height="1.8" fill="#ce9178"/><rect x="1055.32" y="134.74" width="4.79" height="1.8" fill="#ce9178"/><rect x="1061.07" y="134.74" width="1.92" height="1.8" fill="#ce9178"/><rect x="1063.94" y="134.74" width="2.87" height="1.8" fill="#ce9178"/><rect x="1067.77" y="134.74" width="7.66" height="1.8" fill="#ce9178"/><rect x="987.30" y="136.67" width="2.87" height="1.8" fill="#ce9178"/><rect x="991.13" y="136.67" width="3.83" height="1.8" fill="#ce9178"/><rect x="995.92" y="136.67" width="3.83" height="1.8" fill="#ce9178"/><rect x="1000.71" y="136.67" width="9.58" height="1.8" fill="#ce9178"/><rect x="1011.25" y="136.67" width="2.87" height="1.8" fill="#ce9178"/><rect x="1015.08" y="136.67" width="3.83" height="1.8" fill="#ce9178"/><rect x="1019.87" y="136.67" width="2.87" height="1.8" fill="#ce9178"/><rect x="1023.70" y="136.67" width="3.83" height="1.8" fill="#ce9178"/><rect x="1028.49" y="136.67" width="3.83" height="1.8" fill="#ce9178"/><rect x="1033.28" y="136.67" width="9.58" height="1.8" fill="#ce9178"/><rect x="1043.82" y="136.67" width="11.50" height="1.8" fill="#ce9178"/><rect x="1056.28" y="136.67" width="8.62" height="1.8" fill="#ce9178"/><rect x="1065.86" y="136.67" width="10.54" height="1.8" fill="#ce9178"/><rect x="987.30" y="138.60" width="9.58" height="1.8" fill="#ce9178"/><rect x="997.84" y="138.60" width="1.92" height="1.8" fill="#ce9178"/><rect x="1000.71" y="138.60" width="2.87" height="1.8" fill="#ce9178"/><rect x="1004.54" y="138.60" width="10.54" height="1.8" fill="#ce9178"/><rect x="1016.04" y="138.60" width="1.92" height="1.8" fill="#ce9178"/><rect x="1018.91" y="138.60" width="2.87" height="1.8" fill="#ce9178"/><rect x="1022.75" y="138.60" width="4.79" height="1.8" fill="#ce9178"/><rect x="1028.49" y="138.60" width="3.83" height="1.8" fill="#ce9178"/><rect x="1033.28" y="138.60" width="2.87" height="1.8" fill="#ce9178"/><rect x="1037.12" y="138.60" width="6.71" height="1.8" fill="#ce9178"/><rect x="1044.78" y="138.60" width="1.92" height="1.8" fill="#ce9178"/><rect x="1047.65" y="138.60" width="7.66" height="1.8" fill="#ce9178"/><rect x="1056.28" y="138.60" width="5.75" height="1.8" fill="#ce9178"/><rect x="1062.98" y="138.60" width="9.58" height="1.8" fill="#ce9178"/><rect x="987.30" y="140.53" width="4.79" height="1.8" fill="#ce9178"/><rect x="993.05" y="140.53" width="4.79" height="1.8" fill="#ce9178"/><rect x="998.80" y="140.53" width="8.62" height="1.8" fill="#ce9178"/><rect x="1008.38" y="140.53" width="2.87" height="1.8" fill="#ce9178"/><rect x="1012.21" y="140.53" width="3.83" height="1.8" fill="#ce9178"/><rect x="1017.00" y="140.53" width="7.66" height="1.8" fill="#ce9178"/><rect x="1025.62" y="140.53" width="3.83" height="1.8" fill="#ce9178"/><rect x="1030.41" y="140.53" width="6.71" height="1.8" fill="#ce9178"/><rect x="1038.07" y="140.53" width="9.58" height="1.8" fill="#ce9178"/><rect x="1048.61" y="140.53" width="7.66" height="1.8" fill="#ce9178"/><rect x="1057.23" y="140.53" width="3.83" height="1.8" fill="#ce9178"/><rect x="1062.02" y="140.53" width="4.79" height="1.8" fill="#ce9178"/><rect x="1067.77" y="140.53" width="8.62" height="1.8" fill="#ce9178"/><rect x="987.30" y="142.46" width="8.62" height="1.8" fill="#ce9178"/><rect x="996.88" y="142.46" width="7.66" height="1.8" fill="#ce9178"/><rect x="1005.50" y="142.46" width="1.92" height="1.8" fill="#ce9178"/><rect x="1008.38" y="142.46" width="4.79" height="1.8" fill="#ce9178"/><rect x="1014.12" y="142.46" width="6.71" height="1.8" fill="#ce9178"/><rect x="987.30" y="144.39" width="2.87" height="1.8" fill="#569cd6"/><rect x="991.13" y="144.39" width="11.50" height="1.8" fill="#9cdcfe"/><rect x="1003.59" y="144.39" width="0.96" height="1.8" fill="#d4d4d4"/><rect x="1005.50" y="144.39" width="26.82" height="1.8" fill="#ce9178"/><rect x="1032.33" y="144.39" width="0.96" height="1.8" fill="#d4d4d4"/><rect x="987.30" y="146.32" width="2.87" height="1.8" fill="#569cd6"/><rect x="991.13" y="146.32" width="12.45" height="1.8" fill="#9cdcfe"/><rect x="1004.54" y="146.32" width="0.96" height="1.8" fill="#d4d4d4"/><rect x="1006.46" y="146.32" width="0.96" height="1.8" fill="#ce9178"/><rect x="1007.42" y="146.32" width="47.90" height="1.8" fill="#ce9178"/><rect x="1055.32" y="146.32" width="0.96" height="1.8" fill="#ce9178"/><rect x="987.30" y="150.18" width="4.79" height="1.8" fill="#6a9955"/><rect x="993.05" y="150.18" width="5.75" height="1.8" fill="#6a9955"/><rect x="987.30" y="152.11" width="7.66" height="1.8" fill="#9cdcfe"/><rect x="994.96" y="152.11" width="0.96" height="1.8" fill="#d4d4d4"/><rect x="995.92" y="152.11" width="13.41" height="1.8" fill="#dcdcaa"/><rect x="1009.33" y="152.11" width="0.96" height="1.8" fill="#ffd700"/><rect x="1010.29" y="152.11" width="9.58" height="1.8" fill="#ce9178"/><rect x="1019.87" y="152.11" width="0.96" height="1.8" fill="#ffd700"/><rect x="1020.83" y="152.11" width="0.96" height="1.8" fill="#d4d4d4"/><rect x="1021.79" y="152.11" width="8.62" height="1.8" fill="#9cdcfe"/><rect x="1031.37" y="152.11" width="0.96" height="1.8" fill="#d4d4d4"/><rect x="1033.28" y="152.11" width="5.75" height="1.8" fill="#ce9178"/><rect x="1039.99" y="152.11" width="0.96" height="1.8" fill="#ce9178"/><rect x="1041.91" y="152.11" width="0.96" height="1.8" fill="#ce9178"/><rect x="1043.82" y="152.11" width="0.96" height="1.8" fill="#d4d4d4"/><rect x="1045.74" y="152.11" width="4.79" height="1.8" fill="#9cdcfe"/><rect x="1050.53" y="152.11" width="0.96" height="1.8" fill="#d4d4d4"/><rect x="1051.49" y="152.11" width="5.75" height="1.8" fill="#4fc1ff"/><rect x="1058.19" y="152.11" width="0.96" height="1.8" fill="#d4d4d4"/><rect x="1060.11" y="152.11" width="5.75" height="1.8" fill="#ce9178"/><rect x="1066.81" y="152.11" width="0.96" height="1.8" fill="#d4d4d4"/><rect x="987.30" y="154.04" width="12.45" height="1.8" fill="#ce9178"/><rect x="1000.71" y="154.04" width="0.96" height="1.8" fill="#ce9178"/><rect x="1002.63" y="154.04" width="0.96" height="1.8" fill="#ce9178"/><rect x="1004.54" y="154.04" width="0.96" height="1.8" fill="#d4d4d4"/><rect x="1006.46" y="154.04" width="11.50" height="1.8" fill="#9cdcfe"/><rect x="1017.96" y="154.04" width="0.96" height="1.8" fill="#d4d4d4"/><rect x="1018.91" y="154.04" width="5.75" height="1.8" fill="#4fc1ff"/><rect x="1025.62" y="154.04" width="0.96" height="1.8" fill="#d4d4d4"/><rect x="1027.54" y="154.04" width="5.75" height="1.8" fill="#ce9178"/><rect x="1034.24" y="154.04" width="0.96" height="1.8" fill="#d4d4d4"/><rect x="1036.16" y="154.04" width="13.41" height="1.8" fill="#ce9178"/><rect x="1050.53" y="154.04" width="0.96" height="1.8" fill="#ce9178"/><rect x="1052.44" y="154.04" width="0.96" height="1.8" fill="#ce9178"/><rect x="1054.36" y="154.04" width="0.96" height="1.8" fill="#d4d4d4"/><rect x="1056.28" y="154.04" width="12.45" height="1.8" fill="#9cdcfe"/><rect x="1068.73" y="154.04" width="0.96" height="1.8" fill="#d4d4d4"/><rect x="1069.69" y="154.04" width="5.75" height="1.8" fill="#4fc1ff"/><rect x="1075.44" y="154.04" width="0.96" height="1.8" fill="#d4d4d4"/><rect x="987.30" y="157.90" width="4.79" height="1.8" fill="#6a9955"/><rect x="993.05" y="157.90" width="7.66" height="1.8" fill="#6a9955"/><rect x="1001.67" y="157.90" width="8.62" height="1.8" fill="#6a9955"/><rect x="1011.25" y="157.90" width="4.79" height="1.8" fill="#6a9955"/><rect x="1017.00" y="157.90" width="10.54" height="1.8" fill="#6a9955"/><rect x="987.30" y="159.83" width="7.66" height="1.8" fill="#9cdcfe"/><rect x="994.96" y="159.83" width="0.96" height="1.8" fill="#d4d4d4"/><rect x="995.92" y="159.83" width="13.41" height="1.8" fill="#dcdcaa"/><rect x="1009.33" y="159.83" width="0.96" height="1.8" fill="#ffd700"/><rect x="1010.29" y="159.83" width="9.58" height="1.8" fill="#ce9178"/><rect x="1019.87" y="159.83" width="0.96" height="1.8" fill="#ffd700"/><rect x="1020.83" y="159.83" width="0.96" height="1.8" fill="#d4d4d4"/><rect x="1021.79" y="159.83" width="8.62" height="1.8" fill="#9cdcfe"/><rect x="1031.37" y="159.83" width="0.96" height="1.8" fill="#d4d4d4"/><rect x="1033.28" y="159.83" width="9.58" height="1.8" fill="#ce9178"/><rect x="1043.82" y="159.83" width="7.66" height="1.8" fill="#ce9178"/><rect x="1052.44" y="159.83" width="0.96" height="1.8" fill="#ce9178"/><rect x="1054.36" y="159.83" width="0.96" height="1.8" fill="#ce9178"/><rect x="1056.28" y="159.83" width="0.96" height="1.8" fill="#d4d4d4"/><rect x="1058.19" y="159.83" width="4.79" height="1.8" fill="#9cdcfe"/><rect x="1062.98" y="159.83" width="0.96" height="1.8" fill="#d4d4d4"/><rect x="1063.94" y="159.83" width="6.71" height="1.8" fill="#dcdcaa"/><rect x="987.30" y="161.76" width="8.62" height="1.8" fill="#ce9178"/><rect x="996.88" y="161.76" width="0.96" height="1.8" fill="#d4d4d4"/><rect x="998.80" y="161.76" width="5.75" height="1.8" fill="#ce9178"/><rect x="1005.50" y="161.76" width="0.96" height="1.8" fill="#d4d4d4"/><rect x="1007.42" y="161.76" width="5.75" height="1.8" fill="#ce9178"/><rect x="1014.12" y="161.76" width="7.66" height="1.8" fill="#ce9178"/><rect x="1022.75" y="161.76" width="0.96" height="1.8" fill="#ce9178"/><rect x="1024.66" y="161.76" width="0.96" height="1.8" fill="#ce9178"/><rect x="1026.58" y="161.76" width="0.96" height="1.8" fill="#d4d4d4"/><rect x="1028.49" y="161.76" width="11.50" height="1.8" fill="#9cdcfe"/><rect x="1039.99" y="161.76" width="0.96" height="1.8" fill="#d4d4d4"/><rect x="1040.95" y="161.76" width="6.71" height="1.8" fill="#dcdcaa"/><rect x="1047.65" y="161.76" width="4.79" height="1.8" fill="#ce9178"/><rect x="1053.40" y="161.76" width="0.96" height="1.8" fill="#d4d4d4"/><rect x="1055.32" y="161.76" width="5.75" height="1.8" fill="#ce9178"/><rect x="1062.02" y="161.76" width="0.96" height="1.8" fill="#d4d4d4"/><rect x="1063.94" y="161.76" width="5.75" height="1.8" fill="#ce9178"/><rect x="988.26" y="163.69" width="7.66" height="1.8" fill="#ce9178"/><rect x="996.88" y="163.69" width="0.96" height="1.8" fill="#ce9178"/><rect x="998.80" y="163.69" width="0.96" height="1.8" fill="#ce9178"/><rect x="1000.71" y="163.69" width="0.96" height="1.8" fill="#d4d4d4"/><rect x="1002.63" y="163.69" width="12.45" height="1.8" fill="#9cdcfe"/><rect x="1015.08" y="163.69" width="0.96" height="1.8" fill="#d4d4d4"/><rect x="1016.04" y="163.69" width="6.71" height="1.8" fill="#dcdcaa"/><rect x="1022.75" y="163.69" width="4.79" height="1.8" fill="#ce9178"/><rect x="1027.54" y="163.69" width="0.96" height="1.8" fill="#d4d4d4"/><rect x="987.30" y="167.55" width="4.79" height="1.8" fill="#6a9955"/><rect x="993.05" y="167.55" width="6.71" height="1.8" fill="#6a9955"/><rect x="1000.71" y="167.55" width="4.79" height="1.8" fill="#6a9955"/><rect x="1006.46" y="167.55" width="4.79" height="1.8" fill="#6a9955"/><rect x="1012.21" y="167.55" width="3.83" height="1.8" fill="#6a9955"/><rect x="987.30" y="169.48" width="7.66" height="1.8" fill="#9cdcfe"/><rect x="994.96" y="169.48" width="0.96" height="1.8" fill="#d4d4d4"/><rect x="995.92" y="169.48" width="13.41" height="1.8" fill="#dcdcaa"/><rect x="1009.33" y="169.48" width="0.96" height="1.8" fill="#ffd700"/><rect x="1010.29" y="169.48" width="9.58" height="1.8" fill="#ce9178"/><rect x="1019.87" y="169.48" width="0.96" height="1.8" fill="#ffd700"/><rect x="1020.83" y="169.48" width="0.96" height="1.8" fill="#d4d4d4"/><rect x="1021.79" y="169.48" width="8.62" height="1.8" fill="#9cdcfe"/><rect x="1031.37" y="169.48" width="0.96" height="1.8" fill="#d4d4d4"/><rect x="1033.28" y="169.48" width="9.58" height="1.8" fill="#ce9178"/><rect x="1043.82" y="169.48" width="4.79" height="1.8" fill="#ce9178"/><rect x="1049.57" y="169.48" width="0.96" height="1.8" fill="#ce9178"/><rect x="1051.49" y="169.48" width="0.96" height="1.8" fill="#ce9178"/><rect x="1053.40" y="169.48" width="0.96" height="1.8" fill="#d4d4d4"/><rect x="1055.32" y="169.48" width="4.79" height="1.8" fill="#9cdcfe"/><rect x="1060.11" y="169.48" width="0.96" height="1.8" fill="#d4d4d4"/><rect x="1061.07" y="169.48" width="4.79" height="1.8" fill="#dcdcaa"/><rect x="1065.86" y="169.48" width="0.96" height="1.8" fill="#ffd700"/><rect x="1066.81" y="169.48" width="7.66" height="1.8" fill="#d16969"/><rect x="1074.48" y="169.48" width="0.96" height="1.8" fill="#ffd700"/><rect x="1075.44" y="169.48" width="0.96" height="1.8" fill="#d4d4d4"/><rect x="987.30" y="173.34" width="6.71" height="1.8" fill="#6a9955"/><rect x="994.96" y="173.34" width="11.50" height="1.8" fill="#6a9955"/><rect x="1007.42" y="173.34" width="9.58" height="1.8" fill="#6a9955"/><rect x="1017.96" y="173.34" width="5.75" height="1.8" fill="#6a9955"/><rect x="1024.66" y="173.34" width="4.79" height="1.8" fill="#6a9955"/><rect x="1030.41" y="173.34" width="4.79" height="1.8" fill="#6a9955"/><rect x="1036.16" y="173.34" width="3.83" height="1.8" fill="#6a9955"/><rect x="1040.95" y="173.34" width="4.79" height="1.8" fill="#6a9955"/><rect x="1046.70" y="173.34" width="1.92" height="1.8" fill="#6a9955"/><rect x="987.30" y="175.27" width="7.66" height="1.8" fill="#9cdcfe"/><rect x="994.96" y="175.27" width="0.96" height="1.8" fill="#d4d4d4"/><rect x="995.92" y="175.27" width="13.41" height="1.8" fill="#dcdcaa"/><rect x="1009.33" y="175.27" width="0.96" height="1.8" fill="#ffd700"/><rect x="1010.29" y="175.27" width="9.58" height="1.8" fill="#ce9178"/><rect x="1019.87" y="175.27" width="0.96" height="1.8" fill="#ffd700"/><rect x="1020.83" y="175.27" width="0.96" height="1.8" fill="#d4d4d4"/><rect x="1021.79" y="175.27" width="8.62" height="1.8" fill="#9cdcfe"/><rect x="1031.37" y="175.27" width="0.96" height="1.8" fill="#d4d4d4"/><rect x="1033.28" y="175.27" width="4.79" height="1.8" fill="#9cdcfe"/><rect x="1038.07" y="175.27" width="0.96" height="1.8" fill="#d4d4d4"/><rect x="1039.03" y="175.27" width="6.71" height="1.8" fill="#dcdcaa"/><rect x="1045.74" y="175.27" width="0.96" height="1.8" fill="#ffd700"/><rect x="1046.70" y="175.27" width="6.71" height="1.8" fill="#d16969"/><rect x="1053.40" y="175.27" width="0.96" height="1.8" fill="#d4d4d4"/><rect x="1055.32" y="175.27" width="11.50" height="1.8" fill="#ce9178"/><rect x="1066.81" y="175.27" width="0.96" height="1.8" fill="#ffd700"/><rect x="1067.77" y="175.27" width="0.96" height="1.8" fill="#d4d4d4"/><rect x="987.30" y="177.20" width="7.66" height="1.8" fill="#9cdcfe"/><rect x="994.96" y="177.20" width="0.96" height="1.8" fill="#d4d4d4"/><rect x="995.92" y="177.20" width="13.41" height="1.8" fill="#dcdcaa"/><rect x="1009.33" y="177.20" width="0.96" height="1.8" fill="#ffd700"/><rect x="1010.29" y="177.20" width="9.58" height="1.8" fill="#ce9178"/><rect x="1019.87" y="177.20" width="0.96" height="1.8" fill="#ffd700"/><rect x="1020.83" y="177.20" width="0.96" height="1.8" fill="#d4d4d4"/><rect x="1021.79" y="177.20" width="8.62" height="1.8" fill="#9cdcfe"/><rect x="1031.37" y="177.20" width="0.96" height="1.8" fill="#d4d4d4"/><rect x="1033.28" y="177.20" width="4.79" height="1.8" fill="#9cdcfe"/><rect x="1038.07" y="177.20" width="0.96" height="1.8" fill="#d4d4d4"/><rect x="1039.03" y="177.20" width="6.71" height="1.8" fill="#dcdcaa"/><rect x="1045.74" y="177.20" width="0.96" height="1.8" fill="#ffd700"/><rect x="1046.70" y="177.20" width="7.66" height="1.8" fill="#d16969"/><rect x="1054.36" y="177.20" width="0.96" height="1.8" fill="#d4d4d4"/><rect x="1056.28" y="177.20" width="11.50" height="1.8" fill="#ce9178"/><rect x="1067.77" y="177.20" width="0.96" height="1.8" fill="#ffd700"/><rect x="1068.73" y="177.20" width="0.96" height="1.8" fill="#d4d4d4"/><rect x="987.30" y="181.06" width="4.79" height="1.8" fill="#6a9955"/><rect x="993.05" y="181.06" width="10.54" height="1.8" fill="#6a9955"/><rect x="987.30" y="182.99" width="7.66" height="1.8" fill="#9cdcfe"/><rect x="994.96" y="182.99" width="0.96" height="1.8" fill="#d4d4d4"/><rect x="995.92" y="182.99" width="13.41" height="1.8" fill="#dcdcaa"/><rect x="1009.33" y="182.99" width="0.96" height="1.8" fill="#ffd700"/><rect x="1010.29" y="182.99" width="9.58" height="1.8" fill="#ce9178"/><rect x="1019.87" y="182.99" width="0.96" height="1.8" fill="#ffd700"/><rect x="1020.83" y="182.99" width="0.96" height="1.8" fill="#d4d4d4"/><rect x="1021.79" y="182.99" width="8.62" height="1.8" fill="#9cdcfe"/><rect x="1031.37" y="182.99" width="0.96" height="1.8" fill="#d4d4d4"/><rect x="1033.28" y="182.99" width="4.79" height="1.8" fill="#9cdcfe"/><rect x="1038.07" y="182.99" width="0.96" height="1.8" fill="#d4d4d4"/><rect x="1039.03" y="182.99" width="10.54" height="1.8" fill="#dcdcaa"/><rect x="1049.57" y="182.99" width="1.92" height="1.8" fill="#ffd700"/><rect x="1051.49" y="182.99" width="0.96" height="1.8" fill="#d4d4d4"/><rect x="987.30" y="184.92" width="4.79" height="1.8" fill="#6a9955"/><rect x="993.05" y="184.92" width="10.54" height="1.8" fill="#6a9955"/><rect x="987.30" y="186.85" width="7.66" height="1.8" fill="#9cdcfe"/><rect x="994.96" y="186.85" width="0.96" height="1.8" fill="#d4d4d4"/><rect x="995.92" y="186.85" width="13.41" height="1.8" fill="#dcdcaa"/><rect x="1009.33" y="186.85" width="0.96" height="1.8" fill="#ffd700"/><rect x="1010.29" y="186.85" width="9.58" height="1.8" fill="#ce9178"/><rect x="1019.87" y="186.85" width="0.96" height="1.8" fill="#ffd700"/><rect x="1020.83" y="186.85" width="0.96" height="1.8" fill="#d4d4d4"/><rect x="1021.79" y="186.85" width="8.62" height="1.8" fill="#9cdcfe"/><rect x="1031.37" y="186.85" width="0.96" height="1.8" fill="#d4d4d4"/><rect x="1033.28" y="186.85" width="4.79" height="1.8" fill="#9cdcfe"/><rect x="1038.07" y="186.85" width="0.96" height="1.8" fill="#d4d4d4"/><rect x="1039.03" y="186.85" width="10.54" height="1.8" fill="#dcdcaa"/><rect x="1049.57" y="186.85" width="1.92" height="1.8" fill="#ffd700"/><rect x="1051.49" y="186.85" width="0.96" height="1.8" fill="#d4d4d4"/></svg><div style="position:absolute;left:1082px;top:100px;width:1.5px;height:701px;background:#333333"></div><div style="position:absolute;left:1082px;top:100px;width:16px;height:1px;background:#3a3a3a"></div><div style="position:absolute;left:1082.5px;top:509px;width:15.5px;height:2px;background:#7a7a7a"></div><div style="position:absolute;left:1093px;top:281.3px;width:5px;height:18.5px;background:#3794ff"></div><div style="position:absolute;left:1093px;top:308.5px;width:5px;height:18.1px;background:#3794ff"></div><div style="position:absolute;left:1093px;top:445.1px;width:5px;height:28.0px;background:#3794ff"></div><div style="position:absolute;left:0;top:801px;width:1100px;height:25px;background:#007acc"></div><svg style="position:absolute;left:0;top:801px" width="1100" height="25" viewBox="0 801 1100 25" fill="none" stroke="#ffffff" stroke-width="1.2">
<circle cx="24.4" cy="813.5" r="6.6"/><path d="M21.6 810.7 L27.2 816.3 M27.2 810.7 L21.6 816.3"/>
<path d="M55.8 806.8 L62.6 820 H49 Z"/><path d="M55.8 811 V815.5 M55.8 817 V818.2"/>
<circle cx="86.7" cy="813.5" r="6.6"/><path d="M86.7 812 V817.5 M86.7 809.5 V810.7" stroke-width="1.5"/>
<circle cx="772.2" cy="813.5" r="6.8"/><path d="M767.5 818.2 L776.9 808.8"/>
<path d="M875.9 806.8 L883 820 H868.8 Z"/><path d="M875.9 811 V815.5 M875.9 817 V818.2"/>
<path d="M947.5 814 L951 818 L958 808 M954 818 L962 808"/>
<path d="M1033 810 Q1033 806.5 1037 806.5 Q1041 806.5 1041 810 Q1041 814 1037 814 Q1033 814 1033 810 Z M1030.5 820.5 Q1031 815 1037 815 Q1039 815 1040.5 816 M1040 806 H1046 V813 H1043 L1041 815" stroke-width="1.1"/>
<path d="M1067.5 817.5 H1079 Q1077 815.5 1077 812.5 V811.5 Q1077 807 1073.2 807 Q1069.5 807 1069.5 811.5 V812.5 Q1069.5 815.5 1067.5 817.5 Z M1071.5 819.5 Q1073.2 821 1075 819.5"/>
</svg><div class="t" style="left:36.20px;top:795px;font:400 12.6px/40px 'Liberation Sans', sans-serif;color:#ffffff;">0</div>
<div class="t" style="left:67.90px;top:795px;font:400 12.6px/40px 'Liberation Sans', sans-serif;color:#ffffff;">0</div>
<div class="t" style="left:98.70px;top:795px;font:400 12.6px/40px 'Liberation Sans', sans-serif;color:#ffffff;">8</div>
<div class="t" style="left:387.40px;top:795px;font:400 13.1px/40px 'Liberation Sans', sans-serif;color:#ffffff;">Ln 37, Col 69</div>
<div class="t" style="left:484.40px;top:795px;font:400 13.1px/40px 'Liberation Sans', sans-serif;color:#ffffff;">Spaces: 4</div>
<div class="t" style="left:558.60px;top:795px;font:400 13.1px/40px 'Liberation Sans', sans-serif;color:#ffffff;">UTF-8</div>
<div class="t" style="left:613.80px;top:795px;font:400 13.1px/40px 'Liberation Sans', sans-serif;color:#ffffff;">CRLF</div>
<div class="t" style="left:685.50px;top:795px;font:400 13.1px/40px 'Liberation Sans', sans-serif;color:#ffffff;">JavaScript</div>
<div class="t" style="left:784.20px;top:795px;font:400 13.1px/40px 'Liberation Sans', sans-serif;color:#ffffff;">Port : 5500</div>
<div class="t" style="left:887.40px;top:795px;font:400 13.1px/40px 'Liberation Sans', sans-serif;color:#ffffff;">8 Spell</div>
<div class="t" style="left:967.00px;top:795px;font:400 13.1px/40px 'Liberation Sans', sans-serif;color:#ffffff;">Prettier</div>
<div class="t" style="left:663.00px;top:795px;font:400 13.1px/40px 'Liberation Sans', sans-serif;color:#ffffff;">{ }</div>
<div style="position:absolute;left:1098px;top:0;width:438px;height:826px;background:#ffffff"></div><svg style="position:absolute;left:1098px;top:0" width="438" height="82" viewBox="1098 0 438 82">
<path d="M1098 45.5 H1104.5 L1116.5 18.5 H1290 L1302 45.5 H1536 V82 H1098 Z" fill="#f2f2f2"/>
<path d="M1098 45.5 H1104.5 L1116.5 18.5 H1290 L1302 45.5 H1536" fill="none" stroke="#a9a9a9" stroke-width="1"/>
<path d="M1301 26 H1326 L1331.8 39.8 H1306.5 Z" fill="#d8d8d8" stroke="#d0d0d0" stroke-width="1.2" stroke-linejoin="round"/><path d="M1306.5 40.6 H1332" stroke="#c8c8c8" stroke-width="0.8"/>
<rect x="1098" y="80.5" width="438" height="1.2" fill="#c9c9c9"/>
<rect x="1187.5" y="50.5" width="313" height="26.3" rx="2" fill="#ffffff" stroke="#aaaaaa" stroke-width="1"/>
<path d="M1123.5 26.5 H1129.5 L1133 30 V39 H1123.5 Z M1129.5 26.5 V30 H1133" fill="#ffffff" stroke="#5f5f5f" stroke-width="1"/>
<path d="M1277 29.5 L1284 36.5 M1284 29.5 L1277 36.5" stroke="#5a5a5a" stroke-width="1.5"/>
<rect x="1375" y="1" width="23" height="19" fill="#b3b3b3"/>
<circle cx="1386.5" cy="7.8" r="2.3" fill="#ffffff"/>
<path d="M1381.5 14.3 Q1381.5 10.8 1386.5 10.8 Q1391.5 10.8 1391.5 14.3 Z" fill="#ffffff"/>
<path d="M1421.5 15 H1431" stroke="#111" stroke-width="1"/>
<rect x="1465.2" y="10" width="9.3" height="9" fill="none" stroke="#111" stroke-width="1"/>
<path d="M1509.5 10 L1518.5 19 M1518.5 10 L1509.5 19" stroke="#111" stroke-width="1"/>
<path d="M1110 63.3 H1123 M1116 57 L1110 63.3 L1116 69.6" fill="none" stroke="#c6c6c6" stroke-width="1.6"/>
<path d="M1136.5 63.3 H1149.5 M1143.5 57 L1149.5 63.3 L1143.5 69.6" fill="none" stroke="#c6c6c6" stroke-width="1.6"/>
<path d="M1175.3 59.6 A6 6 0 1 0 1176.4 65.5" fill="none" stroke="#5a5a5a" stroke-width="1.9"/>
<path d="M1171.5 61.3 H1177.2 V55.6 Z" fill="#5a5a5a"/>
<circle cx="1201.4" cy="63.3" r="5.9" fill="none" stroke="#5f5f5f" stroke-width="1.3"/>
<path d="M1201.4 62 V67 M1201.4 59.3 V60.6" stroke="#5f5f5f" stroke-width="1.4"/>
<path d="M1487 56.8 L1488.9 61.2 L1493.6 61.6 L1490 64.7 L1491.1 69.3 L1487 66.8 L1482.9 69.3 L1484 64.7 L1480.4 61.6 L1485.1 61.2 Z" fill="none" stroke="#5f5f5f" stroke-width="1.3"/>
<circle cx="1519.3" cy="58.8" r="1.4" fill="#5f5f5f"/><circle cx="1519.3" cy="64" r="1.4" fill="#5f5f5f"/><circle cx="1519.3" cy="69.2" r="1.4" fill="#5f5f5f"/>
</svg><div class="t" style="left:1141.40px;top:14px;font:400 11.6px/40px 'Liberation Sans', sans-serif;color:#3a3a3a;letter-spacing:-0.4px;">JavaScript Ex11</div>
<div class="t" style="left:1216.20px;top:44px;font:400 13.0px/40px 'Liberation Sans', sans-serif;color:#777777;"><span style="color:#222">127.0.0.1</span>:5500/ex11/js_ex11.html</div>
<div style="position:absolute;left:1520px;top:82px;width:16px;height:744px;background:#f1f1f1"></div><div style="position:absolute;left:1522px;top:98.3px;width:12px;height:357.4px;background:#c1c1c1"></div><svg style="position:absolute;left:1520px;top:82px" width="16" height="744" viewBox="1520 82 16 744"><path d="M1524.5 92.3 H1531.2 L1527.85 88.8 Z" fill="#a3a3a3"/><path d="M1524.2 818 H1531.4 L1527.8 822 Z" fill="#505050"/></svg><div class="t" style="left:1107.00px;top:94px;font:700 23.0px/40px 'Liberation Serif', serif;color:#000000;">JavaScript Ex11: JavaScript Strings</div>
<div class="t" style="left:1107.00px;top:136px;font:700 15.35px/40px 'Liberation Serif', serif;color:#000000;">Ex11.1 Strings Double Quotes and Single Quotes</div>
<div class="t" style="left:1107.00px;top:168px;font:400 15.35px/40px 'Liberation Serif', serif;color:#000000;">I like Iron Man and Captain America.</div>
<div class="t" style="left:1107.00px;top:201px;font:700 15.35px/40px 'Liberation Serif', serif;color:#000000;">Ex11.2 Strings using Backslash</div>
<div class="t" style="left:1107.00px;top:234px;font:400 15.35px/40px 'Liberation Serif', serif;color:#000000;">What's your name?</div>
<div class="t" style="left:1107.00px;top:251px;font:400 15.35px/40px 'Liberation Serif', serif;color:#000000;">You can call me "Aj.NesT", and you?</div>
<div class="t" style="left:1107.00px;top:268px;font:400 15.35px/40px 'Liberation Serif', serif;color:#000000;">JavaScript Manpower.</div>
<div class="t" style="left:1107.00px;top:301px;font:700 15.35px/40px 'Liberation Serif', serif;color:#000000;">Ex11.3 String Methods</div>
<div class="t" style="left:1107.00px;top:333px;font:700 15.35px/40px 'Liberation Serif', serif;color:#000000;">(1) .length</div>
<div class="t" style="left:1107.00px;top:366px;font:400 15.35px/40px 'Liberation Serif', serif;color:#000000;">lorem = 574</div>
<div class="t" style="left:1107.00px;top:383px;font:400 15.35px/40px 'Liberation Serif', serif;color:#000000;">eng_alphabet = 26</div>
<div class="t" style="left:1107.00px;top:400px;font:400 15.35px/40px 'Liberation Serif', serif;color:#000000;">thai_alphabet = 44</div>
<div class="t" style="left:1107.00px;top:433px;font:700 15.35px/40px 'Liberation Serif', serif;color:#000000;">(2) .indexOf()</div>
<div class="t" style="left:1107.00px;top:466px;font:400 15.35px/40px 'Liberation Serif', serif;color:#000000;">"Ipsum" position = 6</div>
<div class="t" style="left:1107.00px;top:483px;font:400 15.35px/40px 'Liberation Serif', serif;color:#000000;">"N" position = 13</div>
<div class="t" style="left:1107.00px;top:502px;font:400 15.35px/40px 'Liberation Serif', serif;color:#000;">"<span style="display:inline-block;width:8.6px;letter-spacing:0">u</span>" position = 9</div>
<div class="t" style="left:1107.00px;top:535px;font:700 15.35px/40px 'Liberation Serif', serif;color:#000000;">(3) .match()</div>
<div class="t" style="left:1107.00px;top:567px;font:400 15.35px/40px 'Liberation Serif', serif;color:#000000;">"Ipsum" match = Ipsum,Ipsum,Ipsum,Ipsum</div>
<div class="t" style="left:1107.00px;top:601px;font:700 15.35px/40px 'Liberation Serif', serif;color:#000000;">(4-1) .replace("old text","new text")</div>
<div class="t" style="left:1107.00px;top:635px;font:400 15.35px/40px 'Liberation Serif', serif;color:#000;">Lorem <span style="display:inline-block;width:66.3px;letter-spacing:0.83px">uvnuñuaɔ</span> is simply dummy text of the printing and</div>
<div class="t" style="left:1107.00px;top:652px;font:400 15.35px/40px 'Liberation Serif', serif;color:#000000;">typesetting industry. Lorem Ipsum has been the industry's</div>
<div class="t" style="left:1107.00px;top:669px;font:400 15.35px/40px 'Liberation Serif', serif;color:#000000;">standard dummy text ever since the 1500s, when an unknown</div>
<div class="t" style="left:1107.00px;top:687px;font:400 15.35px/40px 'Liberation Serif', serif;color:#000000;">printer took a galley of type and scrambled it to make a type</div>
<div class="t" style="left:1107.00px;top:704px;font:400 15.35px/40px 'Liberation Serif', serif;color:#000000;">specimen book. It has survived not only five centuries, but also</div>
<div class="t" style="left:1107.00px;top:721px;font:400 15.35px/40px 'Liberation Serif', serif;color:#000000;">the leap into electronic typesetting, remaining essentially</div>
<div class="t" style="left:1107.00px;top:738px;font:400 15.35px/40px 'Liberation Serif', serif;color:#000000;">unchanged. It was popularised in the 1960s with the release of</div>
<div class="t" style="left:1107.00px;top:755px;font:400 15.35px/40px 'Liberation Serif', serif;color:#000000;">Letraset sheets containing Lorem Ipsum passages, and more</div>
<div class="t" style="left:1107.00px;top:773px;font:400 15.35px/40px 'Liberation Serif', serif;color:#000000;">recently with desktop publishing software like Aldus PageMaker</div>
<div class="t" style="left:1107.00px;top:790px;font:400 15.35px/40px 'Liberation Serif', serif;color:#000000;">including versions of Lorem Ipsum.</div>

</body></html>
